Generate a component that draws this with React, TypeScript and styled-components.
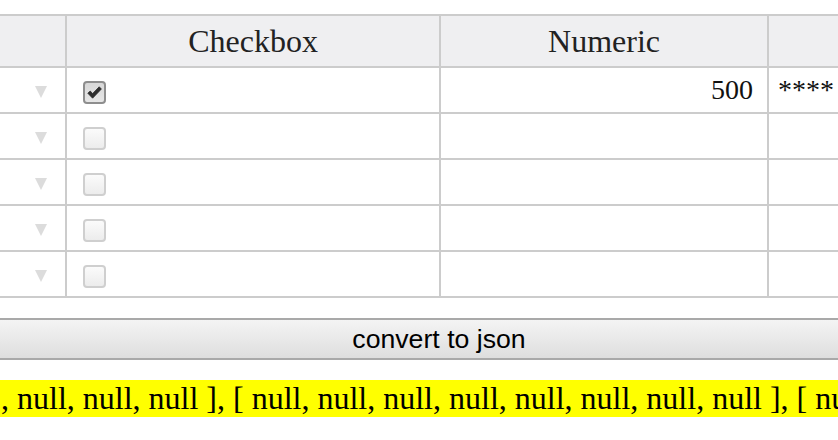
import { createGlobalStyle, styled } from "styled-components";

const GlobalStyle = createGlobalStyle`
  html, body {
    margin: 0;
    padding: 0;
    background: #ffffff;
    overflow: hidden;
  }
  body {
    font-family: "Liberation Serif", "Times New Roman", serif;
    font-size: 32px;
    color: #000;
  }
`;

// the page is scrolled sideways, so the content starts left of the viewport
const Page = styled.div`
  width: 950px;
  margin-left: -36px;
  padding-top: 14px;
`;

const Grid = styled.table`
  border-collapse: separate;
  border-spacing: 0;
  table-layout: fixed;
  width: 950px;
  border-top: 2px solid #cccccc;
  border-left: 2px solid #cccccc;
  font-family: "Liberation Serif", serif;
`;

const HeadCell = styled.th`
  box-sizing: border-box;
  height: 52px;
  padding: 0 8px;
  background: #efeff1;
  border-right: 2px solid #cccccc;
  border-bottom: 2px solid #cccccc;
  font-weight: normal;
  font-size: 32px;
  color: #222222;
  text-align: center;
  white-space: nowrap;
  overflow: hidden;
`;

const Cell = styled.td<{ $align?: "left" | "right" }>`
  box-sizing: border-box;
  height: 46px;
  padding: 0 ${(p) => (p.$align === "right" ? "14px" : "9px")} 0 9px;
  border-right: 2px solid #cccccc;
  border-bottom: 2px solid #cccccc;
  text-align: ${(p) => p.$align ?? "left"};
  vertical-align: middle;
  white-space: nowrap;
  overflow: hidden;
  font-family: "Liberation Serif", serif;
  font-size: 28px;
  color: #111111;
`;

const ArrowCell = styled(Cell)`
  text-align: right;
  padding-right: 18px;
`;

const Arrow = styled.span`
  display: inline-block;
  width: 0;
  height: 0;
  border-left: 6px solid transparent;
  border-right: 6px solid transparent;
  border-top: 12px solid #dcdcdc;
  vertical-align: middle;
  margin-top: -2px;
`;

const CheckCell = styled(Cell)`
  padding-left: 16px;
`;

const Box = styled.span<{ $checked: boolean }>`
  display: inline-flex;
  align-items: center;
  justify-content: center;
  box-sizing: border-box;
  width: 23px;
  height: 23px;
  vertical-align: middle;
  border-radius: 4px;
  border: 2px solid ${(p) => (p.$checked ? "#8e8e8e" : "#cfcfcf")};
  background: ${(p) =>
    p.$checked
      ? "linear-gradient(#d8d8d8, #e6e6e6)"
      : "linear-gradient(#fbfbfb, #ececec)"};
`;

const Button = styled.button`
  display: block;
  box-sizing: border-box;
  width: 950px;
  height: 42px;
  margin-top: 20px;
  padding: 0;
  border: 2px solid #a9a9a9;
  border-radius: 6px;
  background: linear-gradient(#f4f4f4, #dedede);
  font-family: "Liberation Sans", Arial, sans-serif;
  font-size: 26.67px;
  color: #000;
`;

const Output = styled.div`
  margin-top: 20px;
  margin-left: 36px;
  height: 37px;
  background: #ffff00;
  white-space: nowrap;
  overflow: hidden;
`;

const OutputText = styled.span`
  display: block;
  padding-left: 1px;
  line-height: 37px;
  font-family: "Liberation Serif", serif;
  font-size: 32px;
  color: #000;
`;

function CheckMark() {
  return (
    <svg width="15" height="13" viewBox="0 0 15 13">
      <path
        d="M0.8 7.2 L3.2 5 L5.6 7.6 L12.2 0.8 L14.4 3 L5.6 12.2 Z"
        fill="#2e2e2e"
        stroke="#2e2e2e"
        strokeWidth="0.8"
        strokeLinejoin="round"
      />
    </svg>
  );
}

const rows = [
  { checked: true, numeric: "500", text: "****" },
  { checked: false, numeric: "", text: "" },
  { checked: false, numeric: "", text: "" },
  { checked: false, numeric: "", text: "" },
  { checked: false, numeric: "", text: "" },
];

const json =
  ", null, null, null ], [ null, null, null, null, null, null, null, null ], [ null, null, null, null, null, null, null, null ] ]";

export default function App() {
  return (
    <>
      <GlobalStyle />
      <Page>
        <Grid>
          <colgroup>
            <col style={{ width: 101 }} />
            <col style={{ width: 374 }} />
            <col style={{ width: 328 }} />
            <col />
          </colgroup>
          <thead>
            <tr>
              <HeadCell />
              <HeadCell>Checkbox</HeadCell>
              <HeadCell>Numeric</HeadCell>
              <HeadCell />
            </tr>
          </thead>
          <tbody>
            {rows.map((r, i) => (
              <tr key={i}>
                <ArrowCell>
                  <Arrow />
                </ArrowCell>
                <CheckCell>
                  <Box $checked={r.checked}>{r.checked ? <CheckMark /> : null}</Box>
                </CheckCell>
                <Cell $align="right">{r.numeric}</Cell>
                <Cell $align="left">{r.text}</Cell>
              </tr>
            ))}
          </tbody>
        </Grid>
        <Button>convert to json</Button>
        <Output>
          <OutputText>{json}</OutputText>
        </Output>
      </Page>
    </>
  );
}
